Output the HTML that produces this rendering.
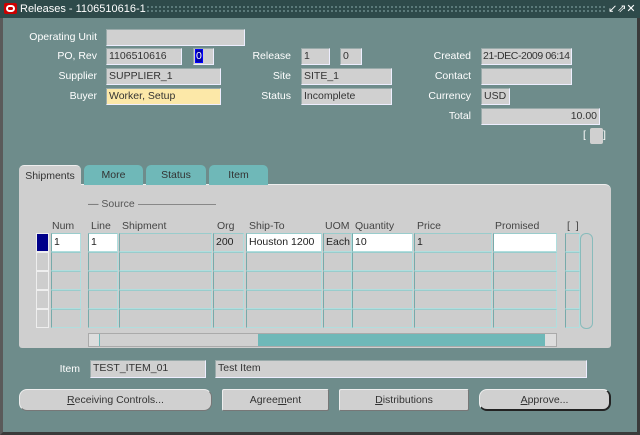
<!DOCTYPE html>
<html><head><style>
*{margin:0;padding:0;box-sizing:border-box}
body{width:640px;height:435px;background:#6e8c8b;font-family:"Liberation Sans",sans-serif;font-size:10.5px;color:#222;position:relative;overflow:hidden}
.a{position:absolute}
.win{left:0;top:0;width:640px;height:435px;border-left:3px solid #5a5a5a;border-right:3px solid #3a3a3a;border-bottom:3px solid #3a3a3a}
.title{left:0;top:0;width:640px;height:18px;background:#2e4a4a;color:#fff;font-size:11px;line-height:18px}
.lbl{color:#fff;text-align:right;font-size:10.5px;line-height:17px;white-space:nowrap}
.f{background:#d0d0d0;border-top:1px solid #9aa;border-left:1px solid #9aa;border-right:1px solid #eef;border-bottom:1px solid #eef;font-size:10.5px;line-height:15px;padding-left:2px;color:#333;white-space:nowrap;overflow:hidden}
.tab{top:165px;height:20px;background:#6fb8b8;border-radius:5px 5px 0 0;text-align:center;line-height:20px;color:#333}
.panel{left:19px;top:184px;width:592px;height:164px;background:#cfcfcf;border-radius:0 6px 3px 3px;border-top:1px solid #eee}
.c{height:19px;background:#cdcdcd;border:1px solid #8fb;border-color:#9cc #b0dede #b0dede #7aa;font-size:10.5px;line-height:17px;padding-left:2px;overflow:hidden;white-space:nowrap}
.w{background:#fff}
.h{top:220px;color:#444}
.btn{top:389px;height:22px;background:#d0d0d0;border-radius:8px;text-align:center;line-height:21px;color:#333;border:1px solid #eee;border-right-color:#777;border-bottom-color:#777}
</style></head><body>
<div class="a win"></div>
<div class="a title"><span class="a" style="left:4px;top:3px;width:13px;height:11px;background:#c00;border-radius:2px"></span><span class="a" style="left:6px;top:5px;width:9px;height:7px;border:2px solid #fff;border-radius:4px"></span><span class="a" style="left:20px">Releases - 1106510616-1</span>
<span class="a" style="left:146px;top:5px;width:460px;height:8px;background-image:radial-gradient(#6a8a8a 1px,transparent 1px);background-size:4px 4px"></span>
<span class="a" style="left:608px;font-size:11px">&#8601;&#8663;&#10005;</span></div>

<div class="a lbl" style="left:0;top:29px;width:97px">Operating Unit</div>
<div class="a f" style="left:106px;top:29px;width:139px;height:17px"></div>
<div class="a lbl" style="left:0;top:48px;width:97px">PO, Rev</div>
<div class="a f" style="left:106px;top:48px;width:76px;height:17px">1106510616</div>
<div class="a f" style="left:193px;top:48px;width:21px;height:17px"><span style="background:#00a;color:#fff;outline:1px solid #00f">0</span></div>
<div class="a lbl" style="left:0;top:68px;width:97px">Supplier</div>
<div class="a f" style="left:106px;top:68px;width:115px;height:17px">SUPPLIER_1</div>
<div class="a lbl" style="left:0;top:88px;width:97px">Buyer</div>
<div class="a f" style="left:106px;top:88px;width:115px;height:17px;background:#fce8a8">Worker, Setup</div>

<div class="a lbl" style="left:200px;top:48px;width:91px">Release</div>
<div class="a f" style="left:301px;top:48px;width:29px;height:17px">1</div>
<div class="a f" style="left:340px;top:48px;width:22px;height:17px">0</div>
<div class="a lbl" style="left:200px;top:68px;width:91px">Site</div>
<div class="a f" style="left:301px;top:68px;width:91px;height:17px">SITE_1</div>
<div class="a lbl" style="left:200px;top:88px;width:91px">Status</div>
<div class="a f" style="left:301px;top:88px;width:91px;height:17px">Incomplete</div>

<div class="a lbl" style="left:380px;top:48px;width:91px">Created</div>
<div class="a f" style="left:481px;top:48px;width:91px;height:17px;letter-spacing:-0.4px;padding-left:1px">21-DEC-2009 06:14</div>
<div class="a lbl" style="left:380px;top:68px;width:91px">Contact</div>
<div class="a f" style="left:481px;top:68px;width:91px;height:17px"></div>
<div class="a lbl" style="left:380px;top:88px;width:91px">Currency</div>
<div class="a f" style="left:481px;top:88px;width:29px;height:17px">USD</div>
<div class="a lbl" style="left:380px;top:108px;width:91px">Total</div>
<div class="a f" style="left:481px;top:108px;width:119px;height:17px;text-align:right;padding-right:2px">10.00</div>
<div class="a lbl" style="left:583px;top:127px;width:30px;text-align:left">[</div>
<div class="a lbl" style="left:603px;top:127px;width:10px;text-align:left">]</div>
<div class="a" style="left:590px;top:128px;width:13px;height:16px;background:#d0d0d0;border-radius:2px"></div>

<div class="a panel"></div>
<div class="a tab" style="left:19px;width:62px;background:#cfcfcf;border-top:1px solid #eee">Shipments</div>
<div class="a tab" style="left:84px;width:59px">More</div>
<div class="a tab" style="left:146px;width:60px">Status</div>
<div class="a tab" style="left:209px;width:59px">Item</div>

<div class="a" style="left:88px;top:198px;color:#555">— Source <span style="display:inline-block;width:78px;height:1px;background:#888;vertical-align:middle"></span></div>
<div class="a h" style="left:52px">Num</div>
<div class="a h" style="left:91px">Line</div>
<div class="a h" style="left:122px">Shipment</div>
<div class="a h" style="left:217px">Org</div>
<div class="a h" style="left:249px">Ship-To</div>
<div class="a h" style="left:325px">UOM</div>
<div class="a h" style="left:355px">Quantity</div>
<div class="a h" style="left:417px">Price</div>
<div class="a h" style="left:495px">Promised</div>
<div class="a h" style="left:567px">[&nbsp;&nbsp;]</div>

<div id="rows"></div>
<script>
var cols=[[51,30],[88,30],[119,93],[213,31],[246,76],[323,29],[352,61],[414,78],[493,64],[565,15]];
var vals=["1","1","","200","Houston 1200","Each","10","1","",""];
var wh=[1,1,0,0,1,0,1,0,1,0];var h="";
for(var r=0;r<5;r++){var y=233+r*19;
h+='<div class="a" style="left:36px;top:'+y+'px;width:13px;height:19px;background:'+(r==0?'#00008a':'#cdcdcd')+';border:1px solid #eee"></div>';
for(var i=0;i<cols.length;i++){h+='<div class="a c'+(r==0&&wh[i]?' w':'')+'" style="left:'+cols[i][0]+'px;top:'+y+'px;width:'+cols[i][1]+'px">'+(r==0?vals[i]:'')+'</div>';}}
document.getElementById('rows').innerHTML=h;
</script>
<div class="a" style="left:580px;top:233px;width:13px;height:96px;background:#cdcdcd;border:1px solid #8bb;border-radius:6px"></div>
<div class="a" style="left:88px;top:333px;width:469px;height:14px;background:#6fb8b8;border:1px solid #aaa"></div>
<div class="a" style="left:100px;top:334px;width:158px;height:12px;background:#d0d0d0"></div>
<div class="a" style="left:89px;top:334px;width:10px;height:12px;background:#ddd"></div>
<div class="a" style="left:545px;top:334px;width:11px;height:12px;background:#ddd"></div>

<div class="a lbl" style="left:40px;top:361px;width:40px">Item</div>
<div class="a f" style="left:90px;top:360px;width:116px;height:18px">TEST_ITEM_01</div>
<div class="a f" style="left:215px;top:360px;width:372px;height:18px">Test Item</div>

<div class="a btn" style="left:19px;width:193px"><u>R</u>eceiving Controls...</div>
<div class="a btn" style="left:222px;width:107px;border-radius:2px">Agree<u>m</u>ent</div>
<div class="a btn" style="left:339px;width:130px;border-radius:2px"><u>D</u>istributions</div>
<div class="a btn" style="left:479px;width:132px;border:1px solid #222;border-top-color:#eee;border-left-color:#eee;border-right:2px solid #222;border-bottom:2px solid #222"><u>A</u>pprove...</div>
</body></html>
